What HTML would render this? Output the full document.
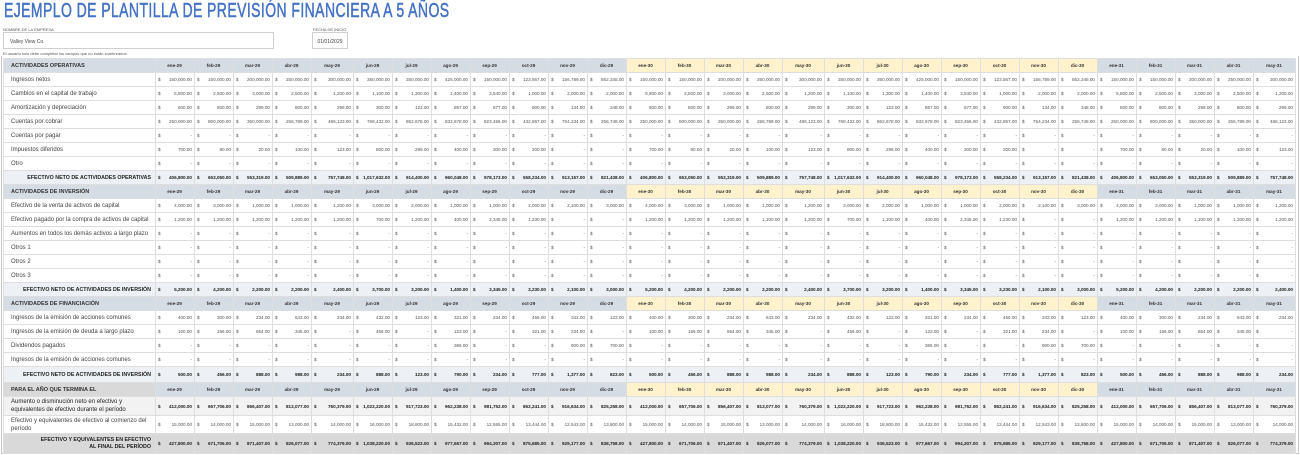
<!DOCTYPE html>
<html><head><meta charset="utf-8">
<style>
body{margin:0;width:1300px;height:455px;background:#fff;font-family:"Liberation Sans",sans-serif;color:#333;position:relative;overflow:hidden}
.title{position:absolute;left:4px;top:0px;font-size:20px;color:#4472c4;letter-spacing:0.6px;transform:scaleX(0.7);transform-origin:left top;white-space:nowrap;font-weight:normal;-webkit-text-stroke:0.5px #4472c4}
.lbl{position:absolute;font-size:4px;color:#555;white-space:nowrap}
.box{position:absolute;border:1px solid #cfcfcf;font-size:5px;color:#444;box-sizing:border-box;padding-top:6px}
.frame{position:absolute;left:1px;top:56px;width:1296px;height:397px;border:1px solid #c8c8c8;border-top:none}
table{border-collapse:collapse;table-layout:fixed;position:absolute;left:3px;top:58px}
td{border:1px solid #dedede;font-size:4.6px;text-align:right;padding:0 2px 0 1px;white-space:nowrap;overflow:hidden;color:#555}
td i{font-style:normal;float:left;padding-left:1px}
tr{height:14px}
td.l{text-align:left;font-size:6px;padding-left:7px;color:#444;white-space:normal;line-height:8px}
tr.h td{background:#d6dce4;text-align:center;font-weight:bold;font-size:4.6px;color:#333}
tr.h td.y{background:#fff2cc}
tr.h td.l{font-size:5.5px;text-align:left}
tr.t td{background:#edf0f4;font-weight:bold;color:#222}
tr.t td.l{text-align:right;font-size:5.3px;padding-right:4px}
tr.h2 td.l{background:#d9d9d9}
tr.g td{background:#f2f2f2;font-weight:bold;color:#222}
tr.f td{background:#d9d9d9;font-weight:bold;color:#222}
tr.f td.l{text-align:right;font-size:5.3px;padding-right:4px;line-height:7px}
</style></head><body>
<div class="title">EJEMPLO DE PLANTILLA DE PREVISIÓN FINANCIERA A 5 AÑOS</div>
<div class="lbl" style="left:3px;top:27px">NOMBRE DE LA EMPRESA</div>
<div class="box" style="left:3px;top:32px;width:271px;height:17px;padding-left:6px">Valley View Co.</div>
<div class="lbl" style="left:313px;top:27px">FECHA DE INICIO</div>
<div class="box" style="left:312px;top:32px;width:36px;height:17px;text-align:center">01/01/2029</div>
<div class="lbl" style="left:3px;top:51px">El usuario solo debe completar los campos que no están sombreados.</div>
<div class="frame"></div>
<table>
<colgroup><col style="width:152px"><col style="width:39px"><col style="width:39px"><col style="width:39px"><col style="width:39px"><col style="width:42px"><col style="width:39px"><col style="width:39px"><col style="width:39px"><col style="width:39px"><col style="width:39px"><col style="width:39px"><col style="width:39px"><col style="width:39px"><col style="width:39px"><col style="width:39px"><col style="width:39px"><col style="width:42px"><col style="width:39px"><col style="width:39px"><col style="width:39px"><col style="width:39px"><col style="width:39px"><col style="width:39px"><col style="width:39px"><col style="width:39px"><col style="width:39px"><col style="width:39px"><col style="width:39px"><col style="width:42px"></colgroup>
<tr class="h"><td class="l">ACTIVIDADES OPERATIVAS</td><td>ene-29</td><td>feb-29</td><td>mar-29</td><td>abr-29</td><td>may-29</td><td>jun-29</td><td>jul-29</td><td>ago-29</td><td>sep-29</td><td>oct-29</td><td>nov-29</td><td>dic-29</td><td class="y">ene-30</td><td class="y">feb-30</td><td class="y">mar-30</td><td class="y">abr-30</td><td class="y">may-30</td><td class="y">jun-30</td><td class="y">jul-30</td><td class="y">ago-30</td><td class="y">sep-30</td><td class="y">oct-30</td><td class="y">nov-30</td><td class="y">dic-30</td><td>ene-31</td><td>feb-31</td><td>mar-31</td><td>abr-31</td><td>may-31</td></tr>
<tr><td class="l">Ingresos netos</td><td><i>$</i>150,000.00</td><td><i>$</i>150,000.00</td><td><i>$</i>200,000.00</td><td><i>$</i>250,000.00</td><td><i>$</i>300,000.00</td><td><i>$</i>350,000.00</td><td><i>$</i>350,000.00</td><td><i>$</i>425,000.00</td><td><i>$</i>150,000.00</td><td><i>$</i>123,567.00</td><td><i>$</i>156,789.00</td><td><i>$</i>562,345.00</td><td><i>$</i>150,000.00</td><td><i>$</i>150,000.00</td><td><i>$</i>200,000.00</td><td><i>$</i>250,000.00</td><td><i>$</i>300,000.00</td><td><i>$</i>350,000.00</td><td><i>$</i>350,000.00</td><td><i>$</i>425,000.00</td><td><i>$</i>150,000.00</td><td><i>$</i>123,567.00</td><td><i>$</i>156,789.00</td><td><i>$</i>562,345.00</td><td><i>$</i>150,000.00</td><td><i>$</i>150,000.00</td><td><i>$</i>200,000.00</td><td><i>$</i>250,000.00</td><td><i>$</i>300,000.00</td></tr>
<tr><td class="l">Cambios en el capital de trabajo</td><td><i>$</i>5,800.00</td><td><i>$</i>2,500.00</td><td><i>$</i>3,000.00</td><td><i>$</i>2,500.00</td><td><i>$</i>1,200.00</td><td><i>$</i>1,100.00</td><td><i>$</i>1,300.00</td><td><i>$</i>1,400.00</td><td><i>$</i>3,540.00</td><td><i>$</i>1,000.00</td><td><i>$</i>2,000.00</td><td><i>$</i>2,000.00</td><td><i>$</i>5,800.00</td><td><i>$</i>2,500.00</td><td><i>$</i>3,000.00</td><td><i>$</i>2,500.00</td><td><i>$</i>1,200.00</td><td><i>$</i>1,100.00</td><td><i>$</i>1,300.00</td><td><i>$</i>1,400.00</td><td><i>$</i>3,540.00</td><td><i>$</i>1,000.00</td><td><i>$</i>2,000.00</td><td><i>$</i>2,000.00</td><td><i>$</i>5,800.00</td><td><i>$</i>2,500.00</td><td><i>$</i>3,000.00</td><td><i>$</i>2,500.00</td><td><i>$</i>1,200.00</td></tr>
<tr><td class="l">Amortización y depreciación</td><td><i>$</i>600.00</td><td><i>$</i>800.00</td><td><i>$</i>299.00</td><td><i>$</i>800.00</td><td><i>$</i>299.00</td><td><i>$</i>300.00</td><td><i>$</i>123.00</td><td><i>$</i>867.00</td><td><i>$</i>877.00</td><td><i>$</i>900.00</td><td><i>$</i>134.00</td><td><i>$</i>348.00</td><td><i>$</i>600.00</td><td><i>$</i>800.00</td><td><i>$</i>299.00</td><td><i>$</i>800.00</td><td><i>$</i>299.00</td><td><i>$</i>300.00</td><td><i>$</i>123.00</td><td><i>$</i>867.00</td><td><i>$</i>877.00</td><td><i>$</i>900.00</td><td><i>$</i>134.00</td><td><i>$</i>348.00</td><td><i>$</i>600.00</td><td><i>$</i>800.00</td><td><i>$</i>299.00</td><td><i>$</i>800.00</td><td><i>$</i>299.00</td></tr>
<tr><td class="l">Cuentas por cobrar</td><td><i>$</i>250,000.00</td><td><i>$</i>800,000.00</td><td><i>$</i>350,000.00</td><td><i>$</i>256,789.00</td><td><i>$</i>486,123.00</td><td><i>$</i>768,432.00</td><td><i>$</i>862,678.00</td><td><i>$</i>832,678.00</td><td><i>$</i>823,456.00</td><td><i>$</i>432,867.00</td><td><i>$</i>754,234.00</td><td><i>$</i>256,748.00</td><td><i>$</i>250,000.00</td><td><i>$</i>800,000.00</td><td><i>$</i>350,000.00</td><td><i>$</i>256,789.00</td><td><i>$</i>486,123.00</td><td><i>$</i>768,432.00</td><td><i>$</i>862,678.00</td><td><i>$</i>832,678.00</td><td><i>$</i>823,456.00</td><td><i>$</i>432,867.00</td><td><i>$</i>754,234.00</td><td><i>$</i>256,748.00</td><td><i>$</i>250,000.00</td><td><i>$</i>800,000.00</td><td><i>$</i>350,000.00</td><td><i>$</i>256,789.00</td><td><i>$</i>486,123.00</td></tr>
<tr><td class="l">Cuentas por pagar</td><td><i>$</i>-</td><td><i>$</i>-</td><td><i>$</i>-</td><td><i>$</i>-</td><td><i>$</i>-</td><td><i>$</i>-</td><td><i>$</i>-</td><td><i>$</i>-</td><td><i>$</i>-</td><td><i>$</i>-</td><td><i>$</i>-</td><td><i>$</i>-</td><td><i>$</i>-</td><td><i>$</i>-</td><td><i>$</i>-</td><td><i>$</i>-</td><td><i>$</i>-</td><td><i>$</i>-</td><td><i>$</i>-</td><td><i>$</i>-</td><td><i>$</i>-</td><td><i>$</i>-</td><td><i>$</i>-</td><td><i>$</i>-</td><td><i>$</i>-</td><td><i>$</i>-</td><td><i>$</i>-</td><td><i>$</i>-</td><td><i>$</i>-</td></tr>
<tr><td class="l">Impuestos diferidos</td><td><i>$</i>700.00</td><td><i>$</i>80.00</td><td><i>$</i>20.00</td><td><i>$</i>100.00</td><td><i>$</i>123.00</td><td><i>$</i>800.00</td><td><i>$</i>299.00</td><td><i>$</i>400.00</td><td><i>$</i>300.00</td><td><i>$</i>200.00</td><td><i>$</i>-</td><td><i>$</i>-</td><td><i>$</i>700.00</td><td><i>$</i>80.00</td><td><i>$</i>20.00</td><td><i>$</i>100.00</td><td><i>$</i>123.00</td><td><i>$</i>800.00</td><td><i>$</i>299.00</td><td><i>$</i>400.00</td><td><i>$</i>300.00</td><td><i>$</i>200.00</td><td><i>$</i>-</td><td><i>$</i>-</td><td><i>$</i>700.00</td><td><i>$</i>80.00</td><td><i>$</i>20.00</td><td><i>$</i>100.00</td><td><i>$</i>123.00</td></tr>
<tr><td class="l">Otro</td><td><i>$</i>-</td><td><i>$</i>-</td><td><i>$</i>-</td><td><i>$</i>-</td><td><i>$</i>-</td><td><i>$</i>-</td><td><i>$</i>-</td><td><i>$</i>-</td><td><i>$</i>-</td><td><i>$</i>-</td><td><i>$</i>-</td><td><i>$</i>-</td><td><i>$</i>-</td><td><i>$</i>-</td><td><i>$</i>-</td><td><i>$</i>-</td><td><i>$</i>-</td><td><i>$</i>-</td><td><i>$</i>-</td><td><i>$</i>-</td><td><i>$</i>-</td><td><i>$</i>-</td><td><i>$</i>-</td><td><i>$</i>-</td><td><i>$</i>-</td><td><i>$</i>-</td><td><i>$</i>-</td><td><i>$</i>-</td><td><i>$</i>-</td></tr>
<tr class="t"><td class="l">EFECTIVO NETO DE ACTIVIDADES OPERATIVAS</td><td><i>$</i>406,800.00</td><td><i>$</i>653,050.00</td><td><i>$</i>553,319.00</td><td><i>$</i>509,889.00</td><td><i>$</i>757,748.00</td><td><i>$</i>1,017,632.00</td><td><i>$</i>914,400.00</td><td><i>$</i>960,048.00</td><td><i>$</i>978,173.00</td><td><i>$</i>558,234.00</td><td><i>$</i>913,157.00</td><td><i>$</i>821,438.00</td><td><i>$</i>406,800.00</td><td><i>$</i>653,050.00</td><td><i>$</i>553,319.00</td><td><i>$</i>509,889.00</td><td><i>$</i>757,748.00</td><td><i>$</i>1,017,632.00</td><td><i>$</i>914,400.00</td><td><i>$</i>960,048.00</td><td><i>$</i>978,173.00</td><td><i>$</i>558,234.00</td><td><i>$</i>913,157.00</td><td><i>$</i>821,438.00</td><td><i>$</i>406,800.00</td><td><i>$</i>653,050.00</td><td><i>$</i>553,319.00</td><td><i>$</i>509,889.00</td><td><i>$</i>757,748.00</td></tr>
<tr class="h"><td class="l">ACTIVIDADES DE INVERSIÓN</td><td>ene-29</td><td>feb-29</td><td>mar-29</td><td>abr-29</td><td>may-29</td><td>jun-29</td><td>jul-29</td><td>ago-29</td><td>sep-29</td><td>oct-29</td><td>nov-29</td><td>dic-29</td><td class="y">ene-30</td><td class="y">feb-30</td><td class="y">mar-30</td><td class="y">abr-30</td><td class="y">may-30</td><td class="y">jun-30</td><td class="y">jul-30</td><td class="y">ago-30</td><td class="y">sep-30</td><td class="y">oct-30</td><td class="y">nov-30</td><td class="y">dic-30</td><td>ene-31</td><td>feb-31</td><td>mar-31</td><td>abr-31</td><td>may-31</td></tr>
<tr><td class="l">Efectivo de la venta de activos de capital</td><td><i>$</i>4,000.00</td><td><i>$</i>3,000.00</td><td><i>$</i>1,000.00</td><td><i>$</i>1,000.00</td><td><i>$</i>1,200.00</td><td><i>$</i>3,000.00</td><td><i>$</i>2,000.00</td><td><i>$</i>1,000.00</td><td><i>$</i>1,000.00</td><td><i>$</i>2,000.00</td><td><i>$</i>2,100.00</td><td><i>$</i>3,000.00</td><td><i>$</i>4,000.00</td><td><i>$</i>3,000.00</td><td><i>$</i>1,000.00</td><td><i>$</i>1,000.00</td><td><i>$</i>1,200.00</td><td><i>$</i>3,000.00</td><td><i>$</i>2,000.00</td><td><i>$</i>1,000.00</td><td><i>$</i>1,000.00</td><td><i>$</i>2,000.00</td><td><i>$</i>2,100.00</td><td><i>$</i>3,000.00</td><td><i>$</i>4,000.00</td><td><i>$</i>3,000.00</td><td><i>$</i>1,000.00</td><td><i>$</i>1,000.00</td><td><i>$</i>1,200.00</td></tr>
<tr><td class="l">Efectivo pagado por la compra de activos de capital</td><td><i>$</i>1,200.00</td><td><i>$</i>1,200.00</td><td><i>$</i>1,200.00</td><td><i>$</i>1,200.00</td><td><i>$</i>1,200.00</td><td><i>$</i>700.00</td><td><i>$</i>1,200.00</td><td><i>$</i>400.00</td><td><i>$</i>2,345.00</td><td><i>$</i>1,230.00</td><td><i>$</i>-</td><td><i>$</i>-</td><td><i>$</i>1,200.00</td><td><i>$</i>1,200.00</td><td><i>$</i>1,200.00</td><td><i>$</i>1,200.00</td><td><i>$</i>1,200.00</td><td><i>$</i>700.00</td><td><i>$</i>1,200.00</td><td><i>$</i>400.00</td><td><i>$</i>2,345.00</td><td><i>$</i>1,230.00</td><td><i>$</i>-</td><td><i>$</i>-</td><td><i>$</i>1,200.00</td><td><i>$</i>1,200.00</td><td><i>$</i>1,200.00</td><td><i>$</i>1,200.00</td><td><i>$</i>1,200.00</td></tr>
<tr><td class="l">Aumentos en todos los demás activos a largo plazo</td><td><i>$</i>-</td><td><i>$</i>-</td><td><i>$</i>-</td><td><i>$</i>-</td><td><i>$</i>-</td><td><i>$</i>-</td><td><i>$</i>-</td><td><i>$</i>-</td><td><i>$</i>-</td><td><i>$</i>-</td><td><i>$</i>-</td><td><i>$</i>-</td><td><i>$</i>-</td><td><i>$</i>-</td><td><i>$</i>-</td><td><i>$</i>-</td><td><i>$</i>-</td><td><i>$</i>-</td><td><i>$</i>-</td><td><i>$</i>-</td><td><i>$</i>-</td><td><i>$</i>-</td><td><i>$</i>-</td><td><i>$</i>-</td><td><i>$</i>-</td><td><i>$</i>-</td><td><i>$</i>-</td><td><i>$</i>-</td><td><i>$</i>-</td></tr>
<tr><td class="l">Otros 1</td><td><i>$</i>-</td><td><i>$</i>-</td><td><i>$</i>-</td><td><i>$</i>-</td><td><i>$</i>-</td><td><i>$</i>-</td><td><i>$</i>-</td><td><i>$</i>-</td><td><i>$</i>-</td><td><i>$</i>-</td><td><i>$</i>-</td><td><i>$</i>-</td><td><i>$</i>-</td><td><i>$</i>-</td><td><i>$</i>-</td><td><i>$</i>-</td><td><i>$</i>-</td><td><i>$</i>-</td><td><i>$</i>-</td><td><i>$</i>-</td><td><i>$</i>-</td><td><i>$</i>-</td><td><i>$</i>-</td><td><i>$</i>-</td><td><i>$</i>-</td><td><i>$</i>-</td><td><i>$</i>-</td><td><i>$</i>-</td><td><i>$</i>-</td></tr>
<tr><td class="l">Otros 2</td><td><i>$</i>-</td><td><i>$</i>-</td><td><i>$</i>-</td><td><i>$</i>-</td><td><i>$</i>-</td><td><i>$</i>-</td><td><i>$</i>-</td><td><i>$</i>-</td><td><i>$</i>-</td><td><i>$</i>-</td><td><i>$</i>-</td><td><i>$</i>-</td><td><i>$</i>-</td><td><i>$</i>-</td><td><i>$</i>-</td><td><i>$</i>-</td><td><i>$</i>-</td><td><i>$</i>-</td><td><i>$</i>-</td><td><i>$</i>-</td><td><i>$</i>-</td><td><i>$</i>-</td><td><i>$</i>-</td><td><i>$</i>-</td><td><i>$</i>-</td><td><i>$</i>-</td><td><i>$</i>-</td><td><i>$</i>-</td><td><i>$</i>-</td></tr>
<tr><td class="l">Otros 3</td><td><i>$</i>-</td><td><i>$</i>-</td><td><i>$</i>-</td><td><i>$</i>-</td><td><i>$</i>-</td><td><i>$</i>-</td><td><i>$</i>-</td><td><i>$</i>-</td><td><i>$</i>-</td><td><i>$</i>-</td><td><i>$</i>-</td><td><i>$</i>-</td><td><i>$</i>-</td><td><i>$</i>-</td><td><i>$</i>-</td><td><i>$</i>-</td><td><i>$</i>-</td><td><i>$</i>-</td><td><i>$</i>-</td><td><i>$</i>-</td><td><i>$</i>-</td><td><i>$</i>-</td><td><i>$</i>-</td><td><i>$</i>-</td><td><i>$</i>-</td><td><i>$</i>-</td><td><i>$</i>-</td><td><i>$</i>-</td><td><i>$</i>-</td></tr>
<tr class="t"><td class="l">EFECTIVO NETO DE ACTIVIDADES DE INVERSIÓN</td><td><i>$</i>5,200.00</td><td><i>$</i>4,200.00</td><td><i>$</i>2,200.00</td><td><i>$</i>2,200.00</td><td><i>$</i>2,400.00</td><td><i>$</i>3,700.00</td><td><i>$</i>3,200.00</td><td><i>$</i>1,400.00</td><td><i>$</i>3,345.00</td><td><i>$</i>3,230.00</td><td><i>$</i>2,100.00</td><td><i>$</i>3,000.00</td><td><i>$</i>5,200.00</td><td><i>$</i>4,200.00</td><td><i>$</i>2,200.00</td><td><i>$</i>2,200.00</td><td><i>$</i>2,400.00</td><td><i>$</i>3,700.00</td><td><i>$</i>3,200.00</td><td><i>$</i>1,400.00</td><td><i>$</i>3,345.00</td><td><i>$</i>3,230.00</td><td><i>$</i>2,100.00</td><td><i>$</i>3,000.00</td><td><i>$</i>5,200.00</td><td><i>$</i>4,200.00</td><td><i>$</i>2,200.00</td><td><i>$</i>2,200.00</td><td><i>$</i>2,400.00</td></tr>
<tr class="h"><td class="l">ACTIVIDADES DE FINANCIACIÓN</td><td>ene-29</td><td>feb-29</td><td>mar-29</td><td>abr-29</td><td>may-29</td><td>jun-29</td><td>jul-29</td><td>ago-29</td><td>sep-29</td><td>oct-29</td><td>nov-29</td><td>dic-29</td><td class="y">ene-30</td><td class="y">feb-30</td><td class="y">mar-30</td><td class="y">abr-30</td><td class="y">may-30</td><td class="y">jun-30</td><td class="y">jul-30</td><td class="y">ago-30</td><td class="y">sep-30</td><td class="y">oct-30</td><td class="y">nov-30</td><td class="y">dic-30</td><td>ene-31</td><td>feb-31</td><td>mar-31</td><td>abr-31</td><td>may-31</td></tr>
<tr><td class="l">Ingresos de la emisión de acciones comunes</td><td><i>$</i>400.00</td><td><i>$</i>300.00</td><td><i>$</i>234.00</td><td><i>$</i>643.00</td><td><i>$</i>234.00</td><td><i>$</i>432.00</td><td><i>$</i>123.00</td><td><i>$</i>321.00</td><td><i>$</i>234.00</td><td><i>$</i>456.00</td><td><i>$</i>343.00</td><td><i>$</i>123.00</td><td><i>$</i>400.00</td><td><i>$</i>300.00</td><td><i>$</i>234.00</td><td><i>$</i>643.00</td><td><i>$</i>234.00</td><td><i>$</i>432.00</td><td><i>$</i>123.00</td><td><i>$</i>321.00</td><td><i>$</i>234.00</td><td><i>$</i>456.00</td><td><i>$</i>343.00</td><td><i>$</i>123.00</td><td><i>$</i>400.00</td><td><i>$</i>300.00</td><td><i>$</i>234.00</td><td><i>$</i>643.00</td><td><i>$</i>234.00</td></tr>
<tr><td class="l">Ingresos de la emisión de deuda a largo plazo</td><td><i>$</i>100.00</td><td><i>$</i>156.00</td><td><i>$</i>654.00</td><td><i>$</i>345.00</td><td><i>$</i>-</td><td><i>$</i>456.00</td><td><i>$</i>-</td><td><i>$</i>123.00</td><td><i>$</i>-</td><td><i>$</i>321.00</td><td><i>$</i>234.00</td><td><i>$</i>-</td><td><i>$</i>100.00</td><td><i>$</i>156.00</td><td><i>$</i>654.00</td><td><i>$</i>345.00</td><td><i>$</i>-</td><td><i>$</i>456.00</td><td><i>$</i>-</td><td><i>$</i>123.00</td><td><i>$</i>-</td><td><i>$</i>321.00</td><td><i>$</i>234.00</td><td><i>$</i>-</td><td><i>$</i>100.00</td><td><i>$</i>156.00</td><td><i>$</i>654.00</td><td><i>$</i>345.00</td><td><i>$</i>-</td></tr>
<tr><td class="l">Dividendos pagados</td><td><i>$</i>-</td><td><i>$</i>-</td><td><i>$</i>-</td><td><i>$</i>-</td><td><i>$</i>-</td><td><i>$</i>-</td><td><i>$</i>-</td><td><i>$</i>366.00</td><td><i>$</i>-</td><td><i>$</i>-</td><td><i>$</i>900.00</td><td><i>$</i>700.00</td><td><i>$</i>-</td><td><i>$</i>-</td><td><i>$</i>-</td><td><i>$</i>-</td><td><i>$</i>-</td><td><i>$</i>-</td><td><i>$</i>-</td><td><i>$</i>366.00</td><td><i>$</i>-</td><td><i>$</i>-</td><td><i>$</i>900.00</td><td><i>$</i>700.00</td><td><i>$</i>-</td><td><i>$</i>-</td><td><i>$</i>-</td><td><i>$</i>-</td><td><i>$</i>-</td></tr>
<tr><td class="l">Ingresos de la emisión de acciones comunes</td><td><i>$</i>-</td><td><i>$</i>-</td><td><i>$</i>-</td><td><i>$</i>-</td><td><i>$</i>-</td><td><i>$</i>-</td><td><i>$</i>-</td><td><i>$</i>-</td><td><i>$</i>-</td><td><i>$</i>-</td><td><i>$</i>-</td><td><i>$</i>-</td><td><i>$</i>-</td><td><i>$</i>-</td><td><i>$</i>-</td><td><i>$</i>-</td><td><i>$</i>-</td><td><i>$</i>-</td><td><i>$</i>-</td><td><i>$</i>-</td><td><i>$</i>-</td><td><i>$</i>-</td><td><i>$</i>-</td><td><i>$</i>-</td><td><i>$</i>-</td><td><i>$</i>-</td><td><i>$</i>-</td><td><i>$</i>-</td><td><i>$</i>-</td></tr>
<tr class="t" style="height:16px"><td class="l">EFECTIVO NETO DE ACTIVIDADES DE INVERSIÓN</td><td><i>$</i>500.00</td><td><i>$</i>456.00</td><td><i>$</i>888.00</td><td><i>$</i>988.00</td><td><i>$</i>234.00</td><td><i>$</i>888.00</td><td><i>$</i>123.00</td><td><i>$</i>790.00</td><td><i>$</i>234.00</td><td><i>$</i>777.00</td><td><i>$</i>1,377.00</td><td><i>$</i>823.00</td><td><i>$</i>500.00</td><td><i>$</i>456.00</td><td><i>$</i>888.00</td><td><i>$</i>988.00</td><td><i>$</i>234.00</td><td><i>$</i>888.00</td><td><i>$</i>123.00</td><td><i>$</i>790.00</td><td><i>$</i>234.00</td><td><i>$</i>777.00</td><td><i>$</i>1,377.00</td><td><i>$</i>823.00</td><td><i>$</i>500.00</td><td><i>$</i>456.00</td><td><i>$</i>888.00</td><td><i>$</i>988.00</td><td><i>$</i>234.00</td></tr>
<tr class="h h2"><td class="l">PARA EL AÑO QUE TERMINA EL</td><td>ene-29</td><td>feb-29</td><td>mar-29</td><td>abr-29</td><td>may-29</td><td>jun-29</td><td>jul-29</td><td>ago-29</td><td>sep-29</td><td>oct-29</td><td>nov-29</td><td>dic-29</td><td class="y">ene-30</td><td class="y">feb-30</td><td class="y">mar-30</td><td class="y">abr-30</td><td class="y">may-30</td><td class="y">jun-30</td><td class="y">jul-30</td><td class="y">ago-30</td><td class="y">sep-30</td><td class="y">oct-30</td><td class="y">nov-30</td><td class="y">dic-30</td><td>ene-31</td><td>feb-31</td><td>mar-31</td><td>abr-31</td><td>may-31</td></tr>
<tr class="g" style="height:19px"><td class="l" style="font-weight:normal">Aumento o disminución neto en efectivo y equivalentes de efectivo durante el período</td><td><i>$</i>412,000.00</td><td><i>$</i>657,706.00</td><td><i>$</i>856,407.00</td><td><i>$</i>813,077.00</td><td><i>$</i>760,379.00</td><td><i>$</i>1,022,220.00</td><td><i>$</i>917,723.00</td><td><i>$</i>962,238.00</td><td><i>$</i>981,752.00</td><td><i>$</i>862,241.00</td><td><i>$</i>916,634.00</td><td><i>$</i>825,258.00</td><td><i>$</i>412,000.00</td><td><i>$</i>657,706.00</td><td><i>$</i>856,407.00</td><td><i>$</i>813,077.00</td><td><i>$</i>760,379.00</td><td><i>$</i>1,022,220.00</td><td><i>$</i>917,723.00</td><td><i>$</i>962,238.00</td><td><i>$</i>981,752.00</td><td><i>$</i>862,241.00</td><td><i>$</i>916,634.00</td><td><i>$</i>825,258.00</td><td><i>$</i>412,000.00</td><td><i>$</i>657,706.00</td><td><i>$</i>856,407.00</td><td><i>$</i>813,077.00</td><td><i>$</i>760,379.00</td></tr>
<tr style="height:18px"><td class="l">Efectivo y equivalentes de efectivo al comienzo del período</td><td><i>$</i>15,000.00</td><td><i>$</i>14,000.00</td><td><i>$</i>15,000.00</td><td><i>$</i>13,000.00</td><td><i>$</i>14,000.00</td><td><i>$</i>16,000.00</td><td><i>$</i>18,800.00</td><td><i>$</i>15,432.00</td><td><i>$</i>12,555.00</td><td><i>$</i>13,444.00</td><td><i>$</i>12,543.00</td><td><i>$</i>13,800.00</td><td><i>$</i>15,000.00</td><td><i>$</i>14,000.00</td><td><i>$</i>15,000.00</td><td><i>$</i>13,000.00</td><td><i>$</i>14,000.00</td><td><i>$</i>16,000.00</td><td><i>$</i>18,800.00</td><td><i>$</i>15,432.00</td><td><i>$</i>12,555.00</td><td><i>$</i>13,444.00</td><td><i>$</i>12,543.00</td><td><i>$</i>13,800.00</td><td><i>$</i>15,000.00</td><td><i>$</i>14,000.00</td><td><i>$</i>15,000.00</td><td><i>$</i>13,000.00</td><td><i>$</i>14,000.00</td></tr>
<tr class="f" style="height:20px"><td class="l">EFECTIVO Y EQUIVALENTES EN EFECTIVO<br>AL FINAL DEL PERÍODO</td><td><i>$</i>427,800.00</td><td><i>$</i>671,706.00</td><td><i>$</i>871,407.00</td><td><i>$</i>826,077.00</td><td><i>$</i>774,379.00</td><td><i>$</i>1,038,220.00</td><td><i>$</i>936,523.00</td><td><i>$</i>977,667.00</td><td><i>$</i>994,307.00</td><td><i>$</i>875,685.00</td><td><i>$</i>929,177.00</td><td><i>$</i>838,758.00</td><td><i>$</i>427,800.00</td><td><i>$</i>671,706.00</td><td><i>$</i>871,407.00</td><td><i>$</i>826,077.00</td><td><i>$</i>774,379.00</td><td><i>$</i>1,038,220.00</td><td><i>$</i>936,523.00</td><td><i>$</i>977,667.00</td><td><i>$</i>994,307.00</td><td><i>$</i>875,685.00</td><td><i>$</i>929,177.00</td><td><i>$</i>838,758.00</td><td><i>$</i>427,800.00</td><td><i>$</i>671,706.00</td><td><i>$</i>871,407.00</td><td><i>$</i>826,077.00</td><td><i>$</i>774,379.00</td></tr>
</table>
</body></html>
